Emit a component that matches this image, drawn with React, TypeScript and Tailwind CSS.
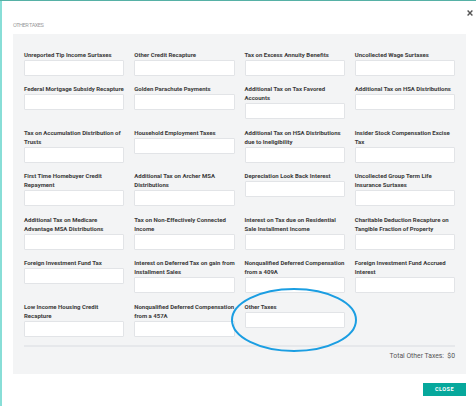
import React from "react";

// Each label is split into the lines it shows on screen.
const ROWS: (string[] | null)[][] = [
  [
    ["Unreported Tip Income Surtaxes"],
    ["Other Credit Recapture"],
    ["Tax on Excess Annuity Benefits"],
    ["Uncollected Wage Surtaxes"],
  ],
  [
    ["Federal Mortgage Subsidy Recapture"],
    ["Golden Parachute Payments"],
    ["Additional Tax on Tax Favored", "Accounts"],
    ["Additional Tax on HSA Distributions"],
  ],
  [
    ["Tax on Accumulation Distribution of", "Trusts"],
    ["Household Employment Taxes"],
    ["Additional Tax on HSA Distributions", "due to Ineligibility"],
    ["Insider Stock Compensation Excise", "Tax"],
  ],
  [
    ["First Time Homebuyer Credit", "Repayment"],
    ["Additional Tax on Archer MSA", "Distributions"],
    ["Depreciation Look Back Interest"],
    ["Uncollected Group Term Life", "Insurance Surtaxes"],
  ],
  [
    ["Additional Tax on Medicare", "Advantage MSA Distributions"],
    ["Tax on Non-Effectively Connected", "Income"],
    ["Interest on Tax due on Residential", "Sale Installment Income"],
    ["Charitable Deduction Recapture on", "Tangible Fraction of Property"],
  ],
  [
    ["Foreign Investment Fund Tax"],
    ["Interest on Deferred Tax on gain from", "Installment Sales"],
    ["Nonqualified Deferred Compensation", "from a 409A"],
    ["Foreign Investment Fund Accrued", "Interest"],
  ],
  [
    ["Low Income Housing Credit", "Recapture"],
    ["Nonqualified Deferred Compensation", "from a 457A"],
    ["Other Taxes"],
    null,
  ],
];

function Field({ lines }: { lines: string[] }) {
  return (
    <div className="flex flex-col">
      <div className="text-[6px] leading-[9px] font-bold text-[#3b3b3b] whitespace-nowrap">
        {lines.map((l, i) => (
          <div key={i}>{l}</div>
        ))}
      </div>
      <input
        type="text"
        className="mt-[1px] h-[16px] w-full bg-white border border-[#e2e4e7] rounded-[1px] outline-none"
      />
    </div>
  );
}

export default function App() {
  return (
    <div
      className="relative w-[476px] h-[406px] overflow-hidden bg-[#88ded7] border-t border-[#56b1a6] pl-[2px]"
      style={{ fontFamily: "Roboto, 'Liberation Sans', sans-serif" }}
    >
      <div className="relative h-full bg-white flex flex-col pt-[21px] pl-[11px] pr-[10px]">
        {/* close icon */}
        <svg
          className="absolute top-[9px] right-[3px]"
          width="6"
          height="6"
          viewBox="0 0 6 6"
        >
          <path d="M0.6 0.6 L5.4 5.4 M5.4 0.6 L0.6 5.4" stroke="#555" strokeWidth="1.4" />
        </svg>

        <div className="text-[5.6px] leading-[7px] tracking-[-0.5px] text-[#9c9c9c] uppercase mb-[5px]">
          Other Taxes
        </div>

        <div className="bg-[#f3f4f5] pt-[15.5px] px-[11px] pb-[14px]">
          <div className="grid grid-cols-4 gap-x-[10px] gap-y-[8.6px] items-start">
            {ROWS.flat().map((lines, i) =>
              lines ? <Field key={i} lines={lines} /> : <div key={i} />
            )}
          </div>
          <div className="mt-[7.5px] h-[2px] bg-[#e6e8eb]" />
          <div className="mt-[5.5px] text-right text-[6.8px] leading-[8px] text-[#555]">
            Total Other Taxes:&nbsp; $0
          </div>
        </div>

        <button className="self-end mt-[8.5px] w-[43px] h-[13px] bg-[#06a89c] text-white text-[5.6px] font-bold tracking-[0.4px] flex items-center justify-center">
          CLOSE
        </button>
      </div>

      {/* highlight annotation */}
      <svg
        className="absolute left-[228px] top-[284px] pointer-events-none"
        width="134"
        height="72"
        viewBox="0 0 134 72"
      >
        <ellipse cx="66" cy="35" rx="62" ry="31" fill="none" stroke="#1b9ee2" strokeWidth="2" />
      </svg>
    </div>
  );
}
